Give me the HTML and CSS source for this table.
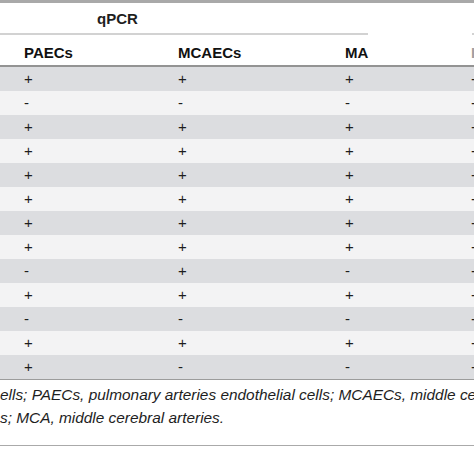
FILE: index.html
```html
<!DOCTYPE html>
<html>
<head>
<meta charset="utf-8">
<link rel="stylesheet" href="styles.css">
</head>
<body>
<div class="sheet">
  <div class="table">
    <div class="group-row">
      <div class="group g1">qPCR</div>
      <div class="group g2"></div>
    </div>
    <div class="row head">
      <div class="cell">PAECs</div>
      <div class="cell">MCAECs</div>
      <div class="cell">MA</div>
      <div class="cell faint">I</div>
    </div>
    <div class="row odd"><div class="cell">+</div><div class="cell">+</div><div class="cell">+</div><div class="cell">+</div></div>
    <div class="row even"><div class="cell">-</div><div class="cell">-</div><div class="cell">-</div><div class="cell">+</div></div>
    <div class="row odd"><div class="cell">+</div><div class="cell">+</div><div class="cell">+</div><div class="cell">+</div></div>
    <div class="row even"><div class="cell">+</div><div class="cell">+</div><div class="cell">+</div><div class="cell">+</div></div>
    <div class="row odd"><div class="cell">+</div><div class="cell">+</div><div class="cell">+</div><div class="cell">+</div></div>
    <div class="row even"><div class="cell">+</div><div class="cell">+</div><div class="cell">+</div><div class="cell">+</div></div>
    <div class="row odd"><div class="cell">+</div><div class="cell">+</div><div class="cell">+</div><div class="cell">+</div></div>
    <div class="row even"><div class="cell">+</div><div class="cell">+</div><div class="cell">+</div><div class="cell">+</div></div>
    <div class="row odd"><div class="cell">-</div><div class="cell">+</div><div class="cell">-</div><div class="cell">+</div></div>
    <div class="row even"><div class="cell">+</div><div class="cell">+</div><div class="cell">+</div><div class="cell">+</div></div>
    <div class="row odd"><div class="cell">-</div><div class="cell">-</div><div class="cell">-</div><div class="cell">+</div></div>
    <div class="row even"><div class="cell">+</div><div class="cell">+</div><div class="cell">+</div><div class="cell">+</div></div>
    <div class="row odd"><div class="cell">+</div><div class="cell">-</div><div class="cell">-</div><div class="cell">+</div></div>
  </div>
  <div class="notes">
    <div class="line">ells; PAECs, pulmonary arteries endothelial cells; MCAECs, middle cerebral arteries endothelial cells</div>
    <div class="line">s; MCA, middle cerebral arteries.</div>
  </div>
</div>
</body>
</html>
```
FILE: styles.css
```css
html, body {
  margin: 0;
  padding: 0;
  background: #ffffff;
  overflow: hidden;
}

.sheet {
  width: 474px;
  height: 474px;
  overflow: hidden;
  font-family: "Liberation Sans", Arial, sans-serif;
  font-size: 15px;
  color: #1e1e1e;
}

.table {
  width: 601px;
  border-top: 3px solid #a9a9a9;
  border-bottom: 1px solid #9c9c9c;
}

.group-row {
  display: flex;
  height: 32px;
}

.group {
  box-sizing: border-box;
  height: 32px;
  border-bottom: 2px solid #d2d2d2;
  font-weight: bold;
  line-height: 24px;
  padding-top: 4px;
}

.g1 {
  width: 368px;
  padding-left: 97px;
}

.g2 {
  margin-left: 104px;
  flex: 1;
}

.row {
  display: grid;
  grid-template-columns: 154px 167px 126px 154px;
  height: 24px;
  line-height: 24px;
}

.cell {
  padding-left: 24px;
  white-space: nowrap;
}

.head {
  height: 32px;
  box-sizing: border-box;
  padding-top: 6px;
  border-bottom: 2px solid #939393;
  font-weight: bold;
  color: #111111;
}

.faint {
  color: #a0a0a0;
}

.odd {
  background: #dcdde0;
}

.even {
  background: #f3f3f4;
}

.notes {
  box-sizing: border-box;
  height: 66px;
  padding-top: 3px;
  border-bottom: 1px solid #aaaaaa;
  font-style: italic;
  font-size: 15.4px;
  line-height: 23px;
  color: #1e1e1e;
}

.line {
  white-space: nowrap;
}
```
